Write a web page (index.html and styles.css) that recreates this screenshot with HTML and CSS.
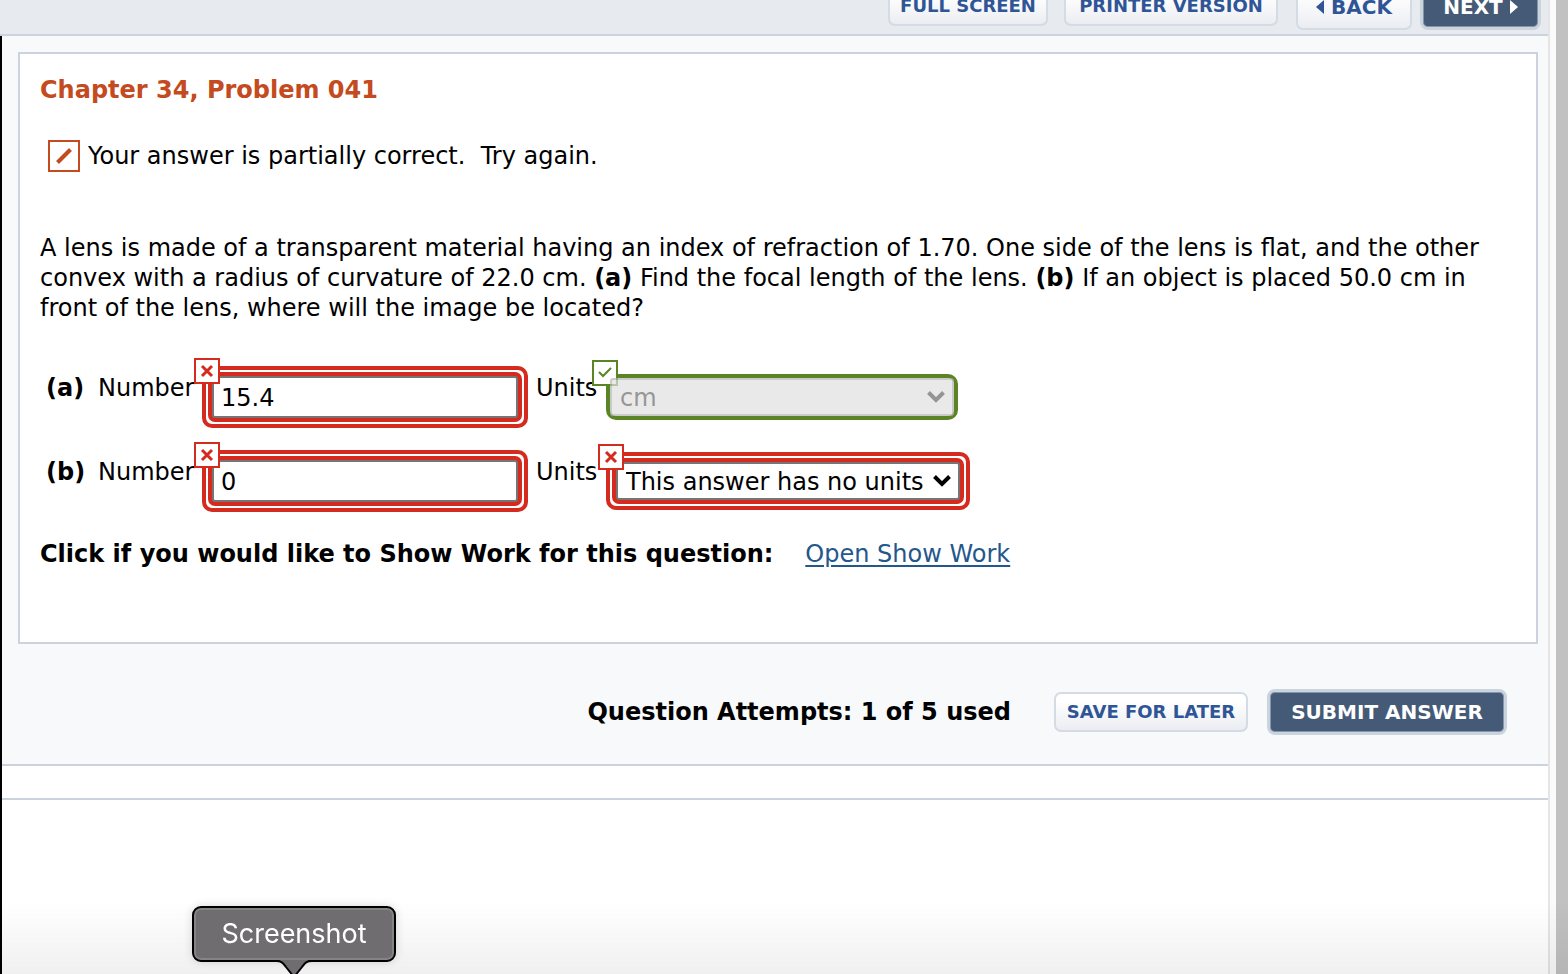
FILE: index.html
```
<!DOCTYPE html>
<html lang="en">
<head>
  <meta charset="UTF-8" />
  <meta name="viewport" content="width=device-width,initial-scale=1.0" />
  <title>Chapter 34, Problem 041</title>
  <link rel="stylesheet" href="styles.css">
</head>
<body>
  <div class="window">
    <div class="page">
      <header class="toolbar">
        <button type="button" class="btn">FULL SCREEN</button>
        <button type="button" class="btn btn-printer">PRINTER VERSION</button>
        <button type="button" class="btn btn-back">
          <svg width="8" height="14" viewBox="0 0 8 14"><path d="M8 0v14L0 7z" fill="currentColor"/></svg>BACK
        </button>
        <button type="button" class="btn-primary btn-next">
          NEXT<svg width="8" height="14" viewBox="0 0 8 14"><path d="M0 0v14l8-7z" fill="currentColor"/></svg>
        </button>
      </header>

      <div class="content">
        <main class="question-area">
          <section class="panel">
            <h1 class="title">Chapter 34, Problem 041</h1>

            <div class="status">
              <svg width="32" height="32" viewBox="0 0 32 32">
                <rect x="1" y="1" width="30" height="30" fill="#fff" stroke="#c44a20" stroke-width="2"/>
                <path d="M9.500 22.500L22.500 9.500" stroke="#c44a20" stroke-width="4"/>
              </svg>
              <span>Your answer is partially correct.&nbsp; Try again.</span>
            </div>

            <p class="problem">
              A lens is made of a transparent material having an index of refraction of 1.70. One side of the lens is flat, and the other<br>
              convex with a radius of curvature of 22.0 cm. <b>(a)</b> Find the focal length of the lens. <b>(b)</b> If an object is placed 50.0 cm in<br>
              front of the lens, where will the image be located?
            </p>

            <div class="answers">
              <div class="answer">
                <b class="part">(a)</b>
                <label class="number-label" for="numberA">Number</label>
                <div class="field wrong">
                  <input type="text" id="numberA" class="control number" value="15.4">
                  <svg class="badge" width="26" height="26" viewBox="0 0 26 26">
                    <rect x="1" y="1" width="24" height="24" fill="#fff" stroke="#d52b1e" stroke-width="2"/>
                    <path d="M8 8l10 10M18 8L8 18" stroke="#d52b1e" stroke-width="3"/>
                  </svg>
                </div>
                <label class="units-label" for="unitsA">Units</label>
                <div class="field right">
                  <svg class="badge" width="26" height="26" viewBox="0 0 26 26">
                    <rect x="1" y="1" width="24" height="24" fill="#fff" stroke="#5b8424" stroke-width="2"/>
                    <path d="M7 12l4 4 8-8" fill="none" stroke="#5b8424" stroke-width="2"/>
                  </svg>
                  <select id="unitsA" class="control units" disabled>
                    <option>cm</option>
                  </select>
                  <svg class="chevron" width="18" height="12" viewBox="0 0 18 12"><path d="M1.500 1.500L9 9l7.500-7.500" fill="none" stroke="#949494" stroke-width="4"/></svg>
                </div>
              </div>

              <div class="answer">
                <b class="part">(b)</b>
                <label class="number-label" for="numberB">Number</label>
                <div class="field wrong">
                  <input type="text" id="numberB" class="control number" value="0">
                  <svg class="badge" width="26" height="26" viewBox="0 0 26 26">
                    <rect x="1" y="1" width="24" height="24" fill="#fff" stroke="#d52b1e" stroke-width="2"/>
                    <path d="M8 8l10 10M18 8L8 18" stroke="#d52b1e" stroke-width="3"/>
                  </svg>
                </div>
                <label class="units-label" for="unitsB">Units</label>
                <div class="field wrong wrong-units">
                  <select id="unitsB" class="control units">
                    <option>This answer has no units</option>
                  </select>
                  <svg class="chevron" width="18" height="12" viewBox="0 0 18 12"><path d="M1.500 1.500L9 9l7.500-7.500" fill="none" stroke="#000" stroke-width="4"/></svg>
                  <svg class="badge" width="26" height="26" viewBox="0 0 26 26">
                    <rect x="1" y="1" width="24" height="24" fill="#fff" stroke="#d52b1e" stroke-width="2"/>
                    <path d="M8 8l10 10M18 8L8 18" stroke="#d52b1e" stroke-width="3"/>
                  </svg>
                </div>
              </div>
            </div>

            <div class="show-work">
              <b>Click if you would like to Show Work for this question:</b>
              <a href="#">Open Show Work</a>
            </div>
          </section>

          <div class="actions">
            <b>Question Attempts: 1 of 5 used</b>
            <button type="button" class="btn btn-save">SAVE FOR LATER</button>
            <button type="button" class="btn-primary">SUBMIT ANSWER</button>
          </div>
        </main>
        <div class="divider"></div>
      </div>
    </div>
    <div class="gutter"></div>
    <div class="scrollbar"></div>
  </div>

  <div class="dock-shade"></div>

  <div class="tooltip">
    Screenshot
    <svg class="tooltip-arrow" width="40" height="18" viewBox="0 0 40 18">
      <path d="M2 0C8 0 9 3 12 7L20 17L28 7C31 3 32 0 38 0V-4H2z" fill="#6f6d70"/>
      <path d="M2 1C8 1 9 3 12 7L20 17L28 7C31 3 32 1 38 1" fill="none" stroke="#000" stroke-width="2"/>
    </svg>
  </div>
</body>
</html>
```
FILE: styles.css
```
* { box-sizing: border-box; }
html, body {
  margin: 0;
  height: 100%;
  overflow: hidden;
  background: #fff;
}
body {
  color: #000;
  font: 24px/30px Verdana, "DejaVu Sans", sans-serif;
}
svg { display: block; }
.window {
  display: flex;
  min-height: 100vh;
}
.page {
  flex: 1;
  display: flex;
  flex-direction: column;
}
.gutter {
  width: 8px;
  background: #fafafa;
  border-left: 2px solid #e5e5e5;
}
.scrollbar {
  width: 12px;
  background: #c1c1c1;
}

/* Top toolbar, scrolled partly out of view */
.toolbar {
  display: flex;
  justify-content: flex-end;
  align-items: flex-end;
  height: 36px;
  padding: 0 7px 4px 0;
  background: #e7eaef;
  border-bottom: 2px solid #ccd3de;
}
.btn,
.btn-primary {
  font-family: Verdana, "DejaVu Sans", sans-serif;
  font-weight: bold;
  text-align: center;
  white-space: nowrap;
  cursor: pointer;
}
.btn {
  height: 40px;
  min-width: 160px;
  padding: 0 8px 2px;
  color: #2f5596;
  font-size: 18px;
  background: linear-gradient(#fff 20%, #ebedf2);
  border: 2px solid #d3dbe4;
  border-radius: 7px;
}
.btn-primary {
  height: 46px;
  min-width: 240px;
  padding: 0 16px;
  color: #fff;
  font-size: 20px;
  background: #455a76;
  border: 3px solid #cad4df;
  border-radius: 8px;
  box-shadow: inset 0 0 0 1px #8496ac;
}
.toolbar .btn {
  flex-shrink: 0;
  margin: 0 16px 4px 0;
}
.toolbar .btn-printer {
  min-width: 214px;
  margin-right: 18px;
}
.toolbar .btn-back,
.btn-next {
  display: flex;
  align-items: center;
  justify-content: center;
  gap: 7px;
  height: 46px;
  padding-bottom: 0;
  font-size: 20px;
}
.toolbar .btn-back {
  min-width: 116px;
  margin: 0 8px 0 0;
}
.btn-next {
  min-width: 121px;
}

/* Question */
.content {
  flex: 1;
  border-left: 2px solid #000;
}
.question-area {
  padding: 16px 10px 29px 16px;
  background: #f8f9fb;
  border-bottom: 2px solid #ccd3de;
}
.panel {
  padding: 21px 20px 73px;
  background: #fff;
  border: 2px solid #ccd3de;
}
.title {
  margin: 0;
  color: #c44a20;
  font-size: 24px;
  line-height: 30px;
}
.status {
  display: flex;
  align-items: center;
  gap: 8px;
  margin: 35px 0 0 8px;
}
.problem {
  margin: 61px 0 43px;
  white-space: nowrap;
}
.answers {
  display: flex;
  flex-direction: column;
  gap: 22px;
  padding-left: 6px;
}
.answer {
  display: flex;
  align-items: flex-start;
  gap: 8px;
}
.part,
.number-label,
.units-label { margin-top: 7px; }
.part { width: 44px; }
.number-label { width: 96px; }
.units-label { width: 62px; }

.field {
  position: relative;
  border-radius: 10px;
}
.wrong {
  padding: 6px;
  border: 4px solid #d52b1e;
}
.right {
  margin-top: 8px;
  border: 4px solid #5b8424;
}
.wrong-units { margin-top: 2px; }
.control {
  display: block;
  height: 42px;
  margin: 0;
  padding: 1px 7px 0;
  color: #000;
  font: inherit;
  background: #fff;
  border: 2px solid #767676;
  border-radius: 3px;
  appearance: none;
}
.wrong .control { box-shadow: 0 0 0 4px #d52b1e; }
.number { width: 306px; }
.units {
  width: 344px;
  height: 38px;
  padding-left: 8px;
}
.right .units {
  position: relative;
  color: #6a6a6a;
  background: #e1e1e1;
  border-color: #b4b4b4;
  opacity: 0.7;
}
/* correct / incorrect mark on the field corner */
.badge {
  position: absolute;
  top: -12px;
  left: -12px;
}
.right .badge {
  top: -18px;
  left: -18px;
}
.chevron {
  position: absolute;
  top: 50%;
  right: 15px;
  margin-top: -6px;
  pointer-events: none;
}
.right .chevron { right: 9px; }

.show-work {
  display: flex;
  gap: 32px;
  margin-top: 27px;
}
.show-work a {
  color: #24578a;
  text-underline-offset: 3px;
}

.actions {
  display: flex;
  align-items: center;
  justify-content: flex-end;
  padding: 45px 31px 0 0;
}
.btn-save {
  min-width: 194px;
  margin: 0 19px 0 43px;
}
.divider {
  height: 34px;
  border-bottom: 2px solid #ccd3de;
}

/* Dock tooltip over the page */
.dock-shade {
  position: fixed;
  right: 0;
  bottom: 0;
  left: 0;
  height: 72px;
  background: linear-gradient(rgba(0, 0, 0, 0), rgba(0, 0, 0, 0.06));
  pointer-events: none;
}
.tooltip {
  position: fixed;
  bottom: 12px;
  left: 192px;
  width: 204px;
  height: 56px;
  color: #fff;
  font: 27px/52px Inter, sans-serif;
  text-align: center;
  background: #6f6d70;
  border: 2px solid #000;
  border-radius: 9px;
  box-shadow: inset 0 0 0 2px #858386, 0 0 10px rgba(0, 0, 0, 0.15);
}
.tooltip-arrow {
  position: absolute;
  top: 52px;
  left: 80px;
}
```
